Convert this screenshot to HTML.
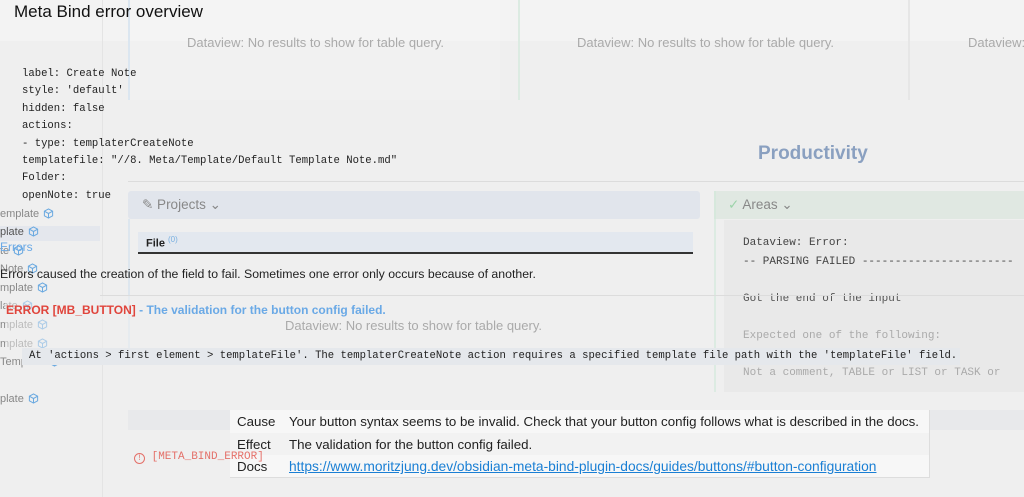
<!DOCTYPE html>
<html><head><meta charset="utf-8"><style>
*{margin:0;padding:0;box-sizing:border-box}
body{width:1024px;height:497px;overflow:hidden;background:#efefef;font-family:"Liberation Sans",sans-serif;position:relative}
.a{position:absolute;white-space:nowrap}
.m{font-family:"Liberation Mono",monospace}
.dv{color:#aaa;font-size:13px}
.cube{display:inline-block;vertical-align:-2px;margin-left:4px}
.sb{font-size:11px;color:#888}
</style></head><body>
<div class="a" style="left:0;top:0;width:1024px;height:41px;background:#f3f3f3"></div>
<div class="a" style="left:102px;top:0;width:1px;height:497px;background:#e4e4e4"></div>
<div class="a" style="left:128px;top:0;width:372px;height:100px;border-left:2px solid #dbe6f0;background:rgba(245,245,245,.4)"></div>
<div class="a" style="left:518px;top:0;width:372px;height:100px;border-left:2px solid #dcebe2"></div>
<div class="a" style="left:908px;top:0;width:116px;height:100px;border-left:2px solid #e6e6e6"></div>
<div class="a dv" style="left:187px;top:35px">Dataview: No results to show for table query.</div>
<div class="a dv" style="left:577px;top:35px">Dataview: No results to show for table query.</div>
<div class="a dv" style="left:968px;top:35px">Dataview:</div>
<div class="a" style="left:14px;top:2px;font-size:17px;color:#111">Meta Bind error overview</div>
<div class="a m" style="left:22px;top:66px;font-size:10.6px;line-height:17.4px;color:#222">label: Create Note<br>style: 'default'<br>hidden: false<br>actions:<br>- type: templaterCreateNote<br>templatefile: "//8. Meta/Template/Default Template Note.md"<br>Folder:<br>openNote: true</div>
<div class="a" style="left:758px;top:143px;font-size:19px;font-weight:bold;color:#8aa0c0">Productivity</div>
<div class="a" style="left:128px;top:181px;width:896px;height:1px;background:#dcdcdc"></div>
<div class="a" style="left:128px;top:191px;width:572px;height:28px;background:#e1e5ec;border-radius:3px"></div>
<div class="a" style="left:142px;top:197px;font-size:13.5px;color:#888">✎ Projects ⌄</div>
<div class="a" style="left:714px;top:191px;width:310px;height:28px;background:#e0e8e2;border-left:2px solid #d6e8dc"></div>
<div class="a" style="left:728px;top:197px;font-size:13.5px;color:#888"><span style="color:#9cd3aa">✓</span> Areas ⌄</div>
<div class="a" style="left:128px;top:219px;width:572px;height:130px;border-left:2px solid #dde6ee"></div>
<div class="a" style="left:138px;top:232px;width:555px;height:22px;background:#e3e8ef;border-bottom:2px solid #333"></div>
<div class="a" style="left:146px;top:235px;font-size:11px;font-weight:bold;color:#222">File <sup style="color:#7ab0e0;font-weight:normal;font-size:8px">(0)</sup></div>
<div class="a" style="left:714px;top:219px;width:310px;height:173px;border-left:2px solid #dcebe2"></div>
<div class="a" style="left:724px;top:220px;width:300px;height:172px;background:#e9e9e9"></div>
<div class="a m" style="left:743px;top:234px;font-size:11px;color:#444;line-height:18.5px">Dataview: Error:<br>-- PARSING FAILED -----------------------<br><br><span style="color:#555">Got the end of the input</span><br><br><span style="color:#aaa">Expected one of the following:</span><br><br><span style="color:#aaa">Not a comment, TABLE or LIST or TASK or</span></div>
<div class="a" style="left:0;top:226px;width:100px;height:15px;background:#e4e7ed"></div>
<svg width="0" height="0" style="position:absolute"><defs><symbol id="c" viewBox="0 0 12 12"><path d="M6 1L10.5 3.5V8.5L6 11L1.5 8.5V3.5Z M1.5 3.5L6 6L10.5 3.5 M6 6V11" fill="none" stroke="#6aa9e0" stroke-width="1.1"/></symbol></defs></svg>
<div class="a sb" style="left:0;top:208px">emplate<svg class="cube" width="11" height="11"><use href="#c"/></svg></div>
<div class="a sb" style="left:0;top:226px;color:#555">plate<svg class="cube" width="11" height="11"><use href="#c"/></svg></div>
<div class="a sb" style="left:0;top:245px">te<svg class="cube" width="11" height="11"><use href="#c"/></svg></div>
<div class="a" style="left:0;top:240px;font-size:12px;color:#6aa9e6">Errors</div>
<div class="a sb" style="left:0;top:263px">Note<svg class="cube" width="11" height="11"><use href="#c"/></svg></div>
<div class="a sb" style="left:0;top:282px">mplate<svg class="cube" width="11" height="11"><use href="#c"/></svg></div>
<div class="a sb" style="left:0;top:300px">late<svg class="cube" width="11" height="11"><use href="#c"/></svg></div>
<div class="a sb" style="left:0;top:319px">mplate<svg class="cube" width="11" height="11"><use href="#c"/></svg></div>
<div class="a sb" style="left:0;top:338px">mplate<svg class="cube" width="11" height="11"><use href="#c"/></svg></div>
<div class="a sb" style="left:0;top:356px">Template<svg class="cube" width="11" height="11"><use href="#c"/></svg></div>
<div class="a sb" style="left:0;top:393px">plate<svg class="cube" width="11" height="11"><use href="#c"/></svg></div>
<div class="a" style="left:0;top:267px;font-size:12.3px;color:#222">Errors caused the creation of the field to fail. Sometimes one error only occurs because of another.</div>
<div class="a" style="left:100px;top:295px;width:924px;height:1px;background:#dcdcdc"></div>
<div class="a" style="left:5px;top:296px;width:700px;height:53px;background:rgba(240,240,240,.5)"></div>
<div class="a" style="left:6px;top:303px;font-size:12px;font-weight:bold;color:#e0453c">ERROR [MB_BUTTON] <span style="color:#6aa9e6">- The validation for the button config failed.</span></div>
<div class="a dv" style="left:285px;top:318px">Dataview: No results to show for table query.</div>
<div class="a" style="left:22px;top:348px;width:938px;height:17px;background:#e5e8ec"></div>
<div class="a m" style="left:29px;top:350px;font-size:10.6px;color:#222">At 'actions &gt; first element &gt; templateFile'. The templaterCreateNote action requires a specified template file path with the 'templateFile' field.</div>
<div class="a" style="left:128px;top:410px;width:896px;height:20px;background:#e8e9eb"></div>
<div class="a" style="left:230px;top:410px;width:700px;height:68px;background:#f2f2f2;border-right:1px solid #ddd;border-bottom:1px solid #ddd"></div>
<div class="a" style="left:230px;top:410px;width:699px;height:23px;background:#f7f7f7"></div>
<div class="a" style="left:230px;top:455px;width:699px;height:22px;background:#f7f7f7"></div>
<div class="a m" style="left:134px;top:451px;font-size:11px;color:rgba(224,69,60,.75)"><span style="display:inline-block;width:11px;height:11px;border:1.3px solid rgba(224,69,60,.75);border-radius:50%;font-size:8px;text-align:center;line-height:9px;vertical-align:-1px">!</span> [META_BIND_ERROR]</div>
<div class="a" style="left:237px;top:411px;font-size:13.3px;color:#222;line-height:22.5px">Cause<br>Effect<br>Docs</div>
<div class="a" style="left:289px;top:411px;font-size:13.3px;color:#222;line-height:22.5px">Your button syntax seems to be invalid. Check that your button config follows what is described in the docs.<br>The validation for the button config failed.<br><span style="color:#1a7fd4;text-decoration:underline;font-size:13.8px">https://www.moritzjung.dev/obsidian-meta-bind-plugin-docs/guides/buttons/#button-configuration</span></div>
</body></html>
